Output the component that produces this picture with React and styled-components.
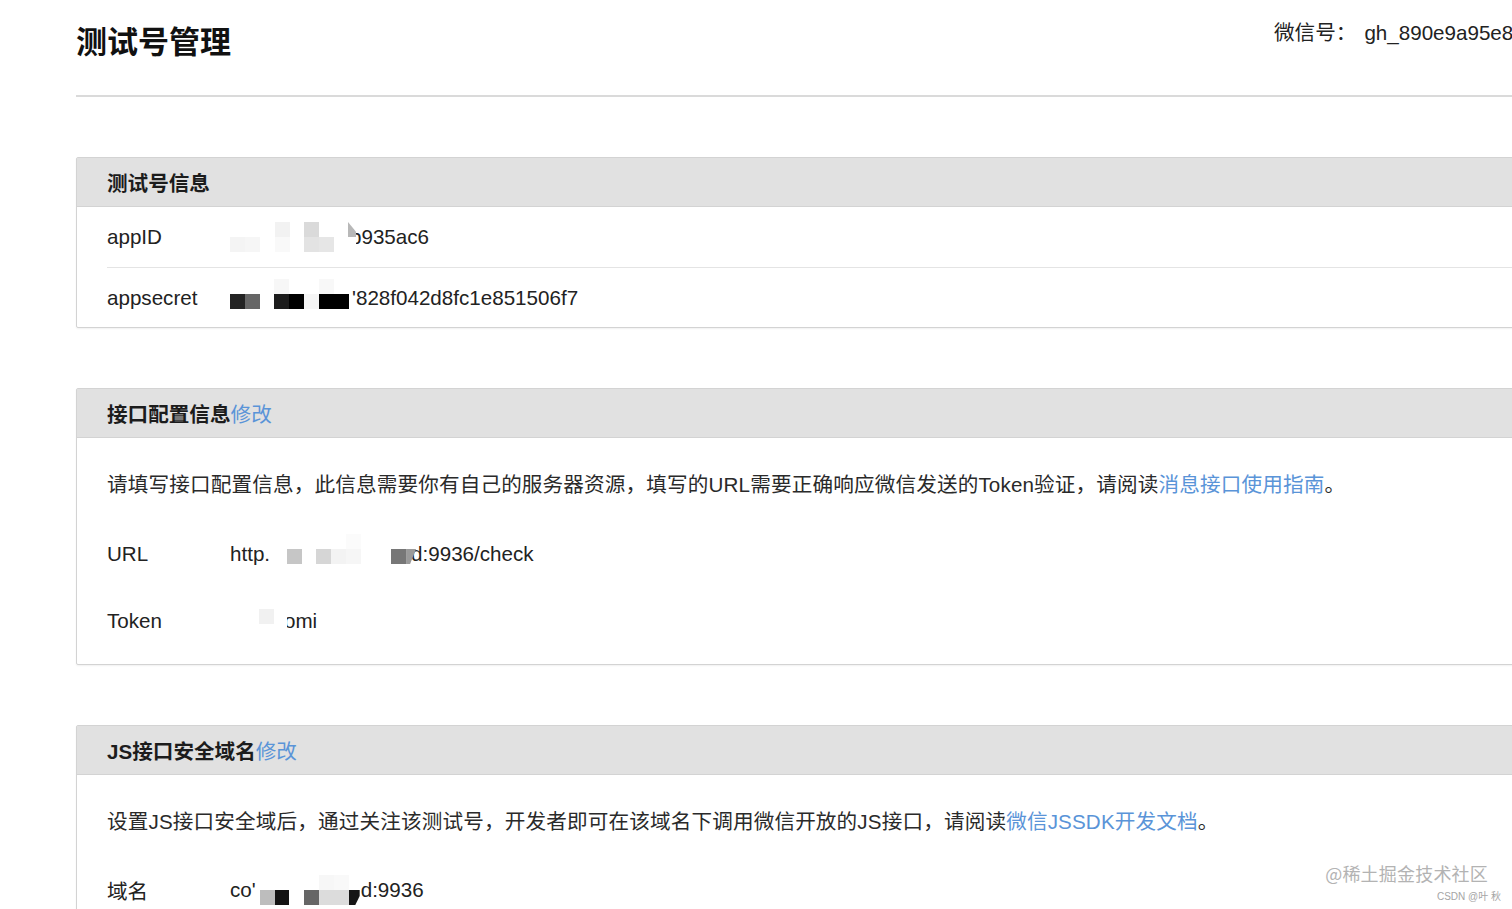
import React from "react";
import styled, { createGlobalStyle } from "styled-components";

const GlobalStyle = createGlobalStyle`
  html, body {
    margin: 0;
    padding: 0;
    background: #fff;
    overflow: hidden;
  }
  body {
    font-family: "Liberation Sans", "Noto Sans CJK SC", sans-serif;
    color: #222;
  }
`;

const Page = styled.div`
  position: relative;
  width: 1512px;
  height: 909px;
  overflow: hidden;
`;

const Content = styled.div`
  width: 1600px;
  padding-left: 76px;
`;

const TopBar = styled.header`
  display: grid;
  grid-template-columns: 1198px auto;
  align-items: start;
  height: 95px;
  border-bottom: 2px solid #dadada;
`;

const Title = styled.h1`
  margin: 22px 0 0;
  font-size: 31px;
  line-height: 36px;
  font-weight: 700;
  color: #111;
  font-family: "Noto Sans CJK SC", sans-serif;
`;

const Account = styled.div`
  margin-top: 21px;
  font-size: 20.6px;
  line-height: 24px;
  color: #222;
  white-space: nowrap;

  span {
    margin-left: 8px;
  }
`;

const Panel = styled.section`
  margin-top: 60px;
  border: 1px solid #d3d3d3;
  border-radius: 2px;
  box-shadow: 0 1px 2px rgba(0, 0, 0, 0.06);
  background: #fff;
`;

const PanelHead = styled.div`
  height: 48px;
  display: flex;
  align-items: center;
  padding-left: 30px;
  background: #e1e1e1;
  border-bottom: 1px solid #d3d3d3;
  font-size: 20.6px;
  font-weight: 700;
  color: #1c1c1c;
`;

const Link = styled.a`
  color: #5a94d8;
  font-weight: 400;
  text-decoration: none;
  cursor: pointer;
`;

const InfoRow = styled.div`
  display: flex;
  align-items: center;
  height: 60px;
  margin-left: 30px;
  font-size: 20.6px;
  & + & {
    border-top: 1px solid #e4e4e4;
    height: 59px;
  }
`;

const PanelBody = styled.div`
  display: flex;
  flex-direction: column;
  padding: 33px 30px 29px;
`;

const Desc = styled.p`
  margin: 0;
  font-size: 20.6px;
  line-height: 28px;
  letter-spacing: 0.15px;
  color: #2a2a2a;
  white-space: nowrap;
`;

const Field = styled.div`
  display: flex;
  align-items: center;
  height: 28px;
  margin-top: ${(p) => p.$gap}px;
  font-size: 20.6px;
`;

const Label = styled.div`
  width: 123px;
  flex-shrink: 0;
  color: #222;
`;

const Value = styled.div`
  display: flex;
  align-items: center;
  white-space: nowrap;
  color: #222;
`;

const Mask = styled.span`
  position: relative;
  z-index: 1;
  display: inline-flex;
  margin-left: ${(p) => p.$before || 0}px;
  margin-right: ${(p) => p.$after || 0}px;
  transform: translateY(${(p) => p.$shift || 0}px);
`;

const MaskCol = styled.span`
  display: flex;
  flex-direction: column;
  width: ${(p) => p.$w}px;
`;

const MaskCell = styled.span`
  height: 15px;
  background: ${(p) => p.$bg || "transparent"};
  clip-path: ${(p) => p.$clip || "none"};
`;

const Watermark = styled.div`
  position: absolute;
  right: 24px;
  bottom: 25px;
  font-size: 18px;
  line-height: 22px;
  color: #b3b3b3;
  font-family: "Noto Sans CJK SC", sans-serif;
  letter-spacing: 0.2px;
`;

const Credit = styled.div`
  position: absolute;
  right: 11px;
  bottom: 6px;
  font-size: 10px;
  line-height: 12px;
  color: #a5a5a5;
`;

const Mosaic = ({ cols, before, after, shift }) => (
  <Mask $before={before} $after={after} $shift={shift}>
    {cols.map((col, i) => (
      <MaskCol key={i} $w={col.w}>
        {col.c.map((cell, j) =>
          cell && typeof cell === "object" ? (
            <MaskCell key={j} $bg={cell.bg} $clip={cell.clip} />
          ) : (
            <MaskCell key={j} $bg={cell} />
          )
        )}
      </MaskCol>
    ))}
  </Mask>
);

const appIdMask = [
  { w: 15, c: [null, "#f4f4f4"] },
  { w: 15, c: [null, "#f6f6f6"] },
  { w: 15, c: [null, null] },
  { w: 15, c: ["#f2f2f2", "#f9f9f9"] },
  { w: 14, c: [null, null] },
  { w: 15, c: ["#dadada", "#e3e3e3"] },
  { w: 15, c: [null, "#e6e6e6"] },
  { w: 14, c: [null, null] },
  {
    w: 8,
    c: [
      { bg: "#b8b8b8", clip: "polygon(0 0, 100% 65%, 100% 100%, 0 100%)" },
      "#fff",
    ],
  },
];

const secretMask = [
  { w: 15, c: [null, "#232323"] },
  { w: 15, c: [null, "#666"] },
  { w: 14, c: [null, null] },
  { w: 15, c: ["#f7f7f7", "#1c1c1c"] },
  { w: 15, c: [null, "#000"] },
  { w: 15, c: [null, "#f5f5f5"] },
  { w: 15, c: ["#f8f8f8", "#000"] },
  { w: 15, c: [null, "#000"] },
];

const urlMask = [
  { w: 15, c: [null, "#c6c6c6"] },
  { w: 14, c: [null, null] },
  { w: 15, c: [null, "#d6d6d6"] },
  { w: 15, c: [null, "#f3f3f3"] },
  { w: 15, c: ["#fbfbfb", "#f6f6f6"] },
  { w: 15, c: [null, null] },
  { w: 15, c: [null, null] },
  { w: 15, c: [null, "#777"] },
  {
    w: 10,
    c: [null, { bg: "#9a9a9a", clip: "polygon(0 0, 100% 0, 40% 100%, 0 100%)" }],
  },
];

const tokenMask = [
  { w: 29, c: [null, null] },
  { w: 15, c: ["#f1f1f1", null] },
  { w: 13, c: ["#fff", "#fff"] },
];

const domainMask = [
  { w: 15, c: [null, "#bdbdbd"] },
  { w: 14, c: [null, "#141414"] },
  { w: 15, c: [null, null] },
  { w: 15, c: [null, "#666"] },
  { w: 15, c: ["#f7f7f7", "#dcdcdc"] },
  { w: 15, c: ["#f9f9f9", "#dcdcdc"] },
  {
    w: 11,
    c: [
      null,
      { bg: "#151515", clip: "polygon(0 0, 100% 0, 100% 40%, 60% 100%, 0 100%)" },
    ],
  },
];

export default function App() {
  return (
    <Page>
      <GlobalStyle />
      <Content>
        <TopBar>
          <Title>测试号管理</Title>
          <Account>
            微信号：<span>gh_890e9a95e8</span>
          </Account>
        </TopBar>

        <Panel>
          <PanelHead>测试号信息</PanelHead>
          <InfoRow>
            <Label>appID</Label>
            <Value>
              <Mosaic cols={appIdMask} after={-6} />
              b935ac6
            </Value>
          </InfoRow>
          <InfoRow>
            <Label>appsecret</Label>
            <Value>
              <Mosaic cols={secretMask} after={3} shift={-4} />
              '828f042d8fc1e851506f7
            </Value>
          </InfoRow>
        </Panel>

        <Panel>
          <PanelHead>
            接口配置信息<Link>修改</Link>
          </PanelHead>
          <PanelBody>
            <Desc>
              请填写接口配置信息，此信息需要你有自己的服务器资源，填写的URL需要正确响应微信发送的Token验证，请阅读
              <Link>消息接口使用指南</Link>。
            </Desc>
            <Field $gap={41}>
              <Label>URL</Label>
              <Value>
                http.
                <Mosaic cols={urlMask} before={17} after={-5} shift={-5} />
                d:9936/check
              </Value>
            </Field>
            <Field $gap={39}>
              <Label>Token</Label>
              <Value>
                <Mosaic cols={tokenMask} after={-3} shift={3} />
                omi
              </Value>
            </Field>
          </PanelBody>
        </Panel>

        <Panel>
          <PanelHead>
            JS接口安全域名<Link>修改</Link>
          </PanelHead>
          <PanelBody>
            <Desc>
              设置JS接口安全域后，通过关注该测试号，开发者即可在该域名下调用微信开放的JS接口，请阅读
              <Link>微信JSSDK开发文档</Link>。
            </Desc>
            <Field $gap={40}>
              <Label>域名</Label>
              <Value>
                co'
                <Mosaic cols={domainMask} before={4} after={1} />
                d:9936
              </Value>
            </Field>
          </PanelBody>
        </Panel>
      </Content>
      <Watermark>@稀土掘金技术社区</Watermark>
      <Credit>CSDN @叶 秋</Credit>
    </Page>
  );
}
